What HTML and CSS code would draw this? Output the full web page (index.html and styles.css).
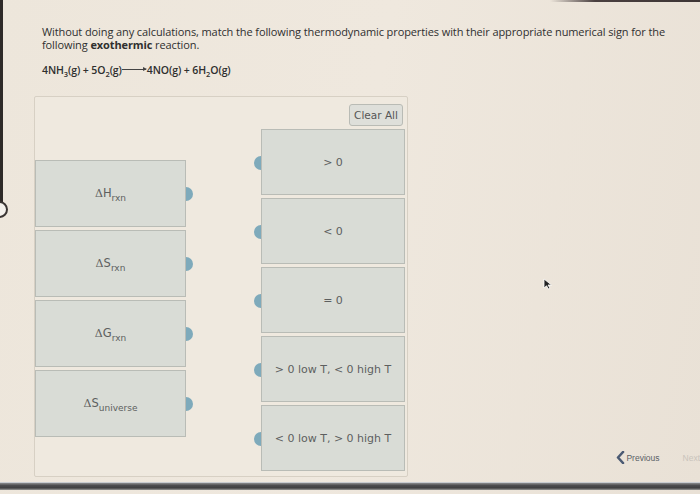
FILE: index.html
```html
<!DOCTYPE html>
<html>
<head>
<meta charset="utf-8">
<link rel="stylesheet" href="styles.css">
</head>
<body>
<div class="screen">
  <div class="edge"><span class="edge-btn"></span></div>
  <div class="topline"></div>
  <div class="content">
    <p class="question"><span class="line">Without doing any calculations, match the following thermodynamic properties with their appropriate numerical sign for the</span><span class="line">following <b>exothermic</b> reaction.</span></p>
    <p class="equation">4NH<sub>3</sub>(g) + 5O<sub>2</sub>(g)<span class="arrow"></span>4NO(g) + 6H<sub>2</sub>O(g)</p>
    <div class="panel">
      <div class="panel-head"><button class="clear">Clear All</button></div>
      <div class="columns">
        <div class="col-left">
          <div class="item prop"><span class="label"><span class="d">Δ</span>H<sub>rxn</sub></span></div>
          <div class="item prop"><span class="label"><span class="d">Δ</span>S<sub>rxn</sub></span></div>
          <div class="item prop"><span class="label"><span class="d">Δ</span>G<sub>rxn</sub></span></div>
          <div class="item prop"><span class="label"><span class="d">Δ</span>S<sub>universe</sub></span></div>
        </div>
        <div class="col-right">
          <div class="item sign">&gt; 0</div>
          <div class="item sign">&lt; 0</div>
          <div class="item sign">= 0</div>
          <div class="item sign">&gt; 0 low T, &lt; 0 high T</div>
          <div class="item sign">&lt; 0 low T, &gt; 0 high T</div>
        </div>
      </div>
    </div>
    <div class="nav">
      <span class="prev"><svg width="9" height="13" viewBox="0 0 9 13"><path d="M7 1 L2 6.5 L7 12" fill="none" stroke="#4b5a73" stroke-width="2.6" stroke-linecap="round" stroke-linejoin="round"/></svg>Previous</span>
      <span class="next">Next</span>
    </div>
  </div>
  <div class="bar"></div>
  <svg class="cursor" width="10" height="12" viewBox="0 0 10 12"><path d="M1 1 L1 10 L3.5 7.8 L5.5 11 L7 10.2 L5 7 L8.5 7 Z" fill="#222" stroke="#fff" stroke-width="0.8"/></svg>
</div>
</body>
</html>
```
FILE: styles.css
```css
* { box-sizing: border-box; }
html, body { margin: 0; padding: 0; }
body {
  width: 700px;
  height: 494px;
  overflow: hidden;
  background: #ece5da;
  font-family: "Open Sans", "Liberation Sans", sans-serif;
}
.screen {
  position: relative;
  width: 700px;
  height: 494px;
  background: linear-gradient(100deg, #ede6db 0%, #efe8de 50%, #e9e1d6 100%);
  display: flex;
  flex-direction: column;
}
.edge {
  position: absolute;
  left: 0;
  top: 0;
  width: 3px;
  height: 205px;
  background: #2e2a28;
}
.edge-btn {
  position: absolute;
  left: -9px;
  top: 201px;
  width: 17px;
  height: 17px;
  border-radius: 50%;
  background: #f4f1ec;
  border: 2px solid #3a3533;
}
.topline {
  position: absolute;
  right: 0;
  top: 0;
  width: 150px;
  height: 2px;
  background: linear-gradient(90deg, rgba(60,50,50,0), #4a4040 30%, #3d3535);
}
.content {
  flex: 1;
  display: flex;
  flex-direction: column;
  padding: 26px 0 0 34px;
}
.question {
  margin: 0 0 0 8px;
  font-size: 11px;
  line-height: 12.5px;
  color: #2f2f2f;
  letter-spacing: -0.1px;
}
.question .line { display: block; white-space: nowrap; }
.question b { font-weight: 700; }
.equation {
  margin: 12px 0 0 8px;
  font-size: 10.5px;
  font-weight: 600;
  color: #2f2f2f;
  line-height: 14px;
  letter-spacing: -0.1px;
}
.equation sub { font-size: 7.5px; line-height: 0; }
.arrow {
  display: inline-block;
  width: 24px;
  height: 1px;
  background: #444;
  vertical-align: 4px;
  position: relative;
  margin-right: 1px;
}
.arrow::after {
  content: "";
  position: absolute;
  right: -1px;
  top: -2px;
  border-left: 4px solid #444;
  border-top: 2.5px solid transparent;
  border-bottom: 2.5px solid transparent;
}
.panel {
  margin-top: 19px;
  width: 374px;
  height: 381px;
  border: 1px solid #d7d0c4;
  border-radius: 2px;
  background: #efe9df;
  padding: 7px 2px 0 0;
  display: flex;
  flex-direction: column;
}
.panel-head {
  display: flex;
  justify-content: flex-end;
  padding-right: 2px;
}
.clear {
  font-family: "DejaVu Sans", Verdana, sans-serif;
  font-size: 10.5px;
  color: #555;
  background: #dedfda;
  border: 1px solid #b9bbb5;
  border-radius: 3px;
  height: 22px;
  width: 54px;
  padding: 0;
}
.columns {
  display: flex;
  justify-content: space-between;
  margin-top: 3px;
}
.col-left {
  display: flex;
  flex-direction: column;
  gap: 3px;
  margin-top: 31px;
}
.col-right {
  display: flex;
  flex-direction: column;
  gap: 3px;
}
.item {
  position: relative;
  display: flex;
  align-items: center;
  justify-content: center;
  background: #d9dcd6;
  border: 1px solid #b9bcb6;
  color: #5d5f5f;
  font-family: "DejaVu Sans", Verdana, sans-serif;
  font-size: 11px;
}
.prop {
  width: 151px;
  height: 67px;
}
.label { display: block; font-size: 11.5px; line-height: 14px; }
.prop sub { font-size: 9px; vertical-align: -4px; line-height: 0; }
.prop .d { font-family: "DejaVu Serif", "Liberation Serif", serif; font-size: 11px; }
.sign {
  width: 144px;
  height: 66px;
}
.prop::after {
  content: "";
  position: absolute;
  right: -8px;
  top: 26px;
  width: 7px;
  height: 14px;
  border-radius: 0 8px 8px 0;
  background: #7eaabb;
}
.sign::before {
  content: "";
  position: absolute;
  left: -8px;
  top: 26px;
  width: 7px;
  height: 14px;
  border-radius: 8px 0 0 8px;
  background: #7eaabb;
}
.nav {
  display: flex;
  align-items: center;
  justify-content: flex-end;
  gap: 23px;
  margin-top: -26px;
  margin-right: 0;
  font-family: "Liberation Sans", Arial, sans-serif;
  font-size: 8.5px;
}
.prev {
  display: flex;
  align-items: center;
  gap: 1px;
  color: #5a5f66;
}
.next { color: #c9c4bc; }
.bar {
  flex: none;
  height: 8px;
  margin-bottom: 4px;
  border-top: 1px solid #c9ccd0;
  background: linear-gradient(180deg, #8b8c8e 0%, #4c4c4e 35%, #3f3f41 70%, #9a9a98 100%);
}
.cursor {
  position: absolute;
  left: 543px;
  top: 278px;
}
```
